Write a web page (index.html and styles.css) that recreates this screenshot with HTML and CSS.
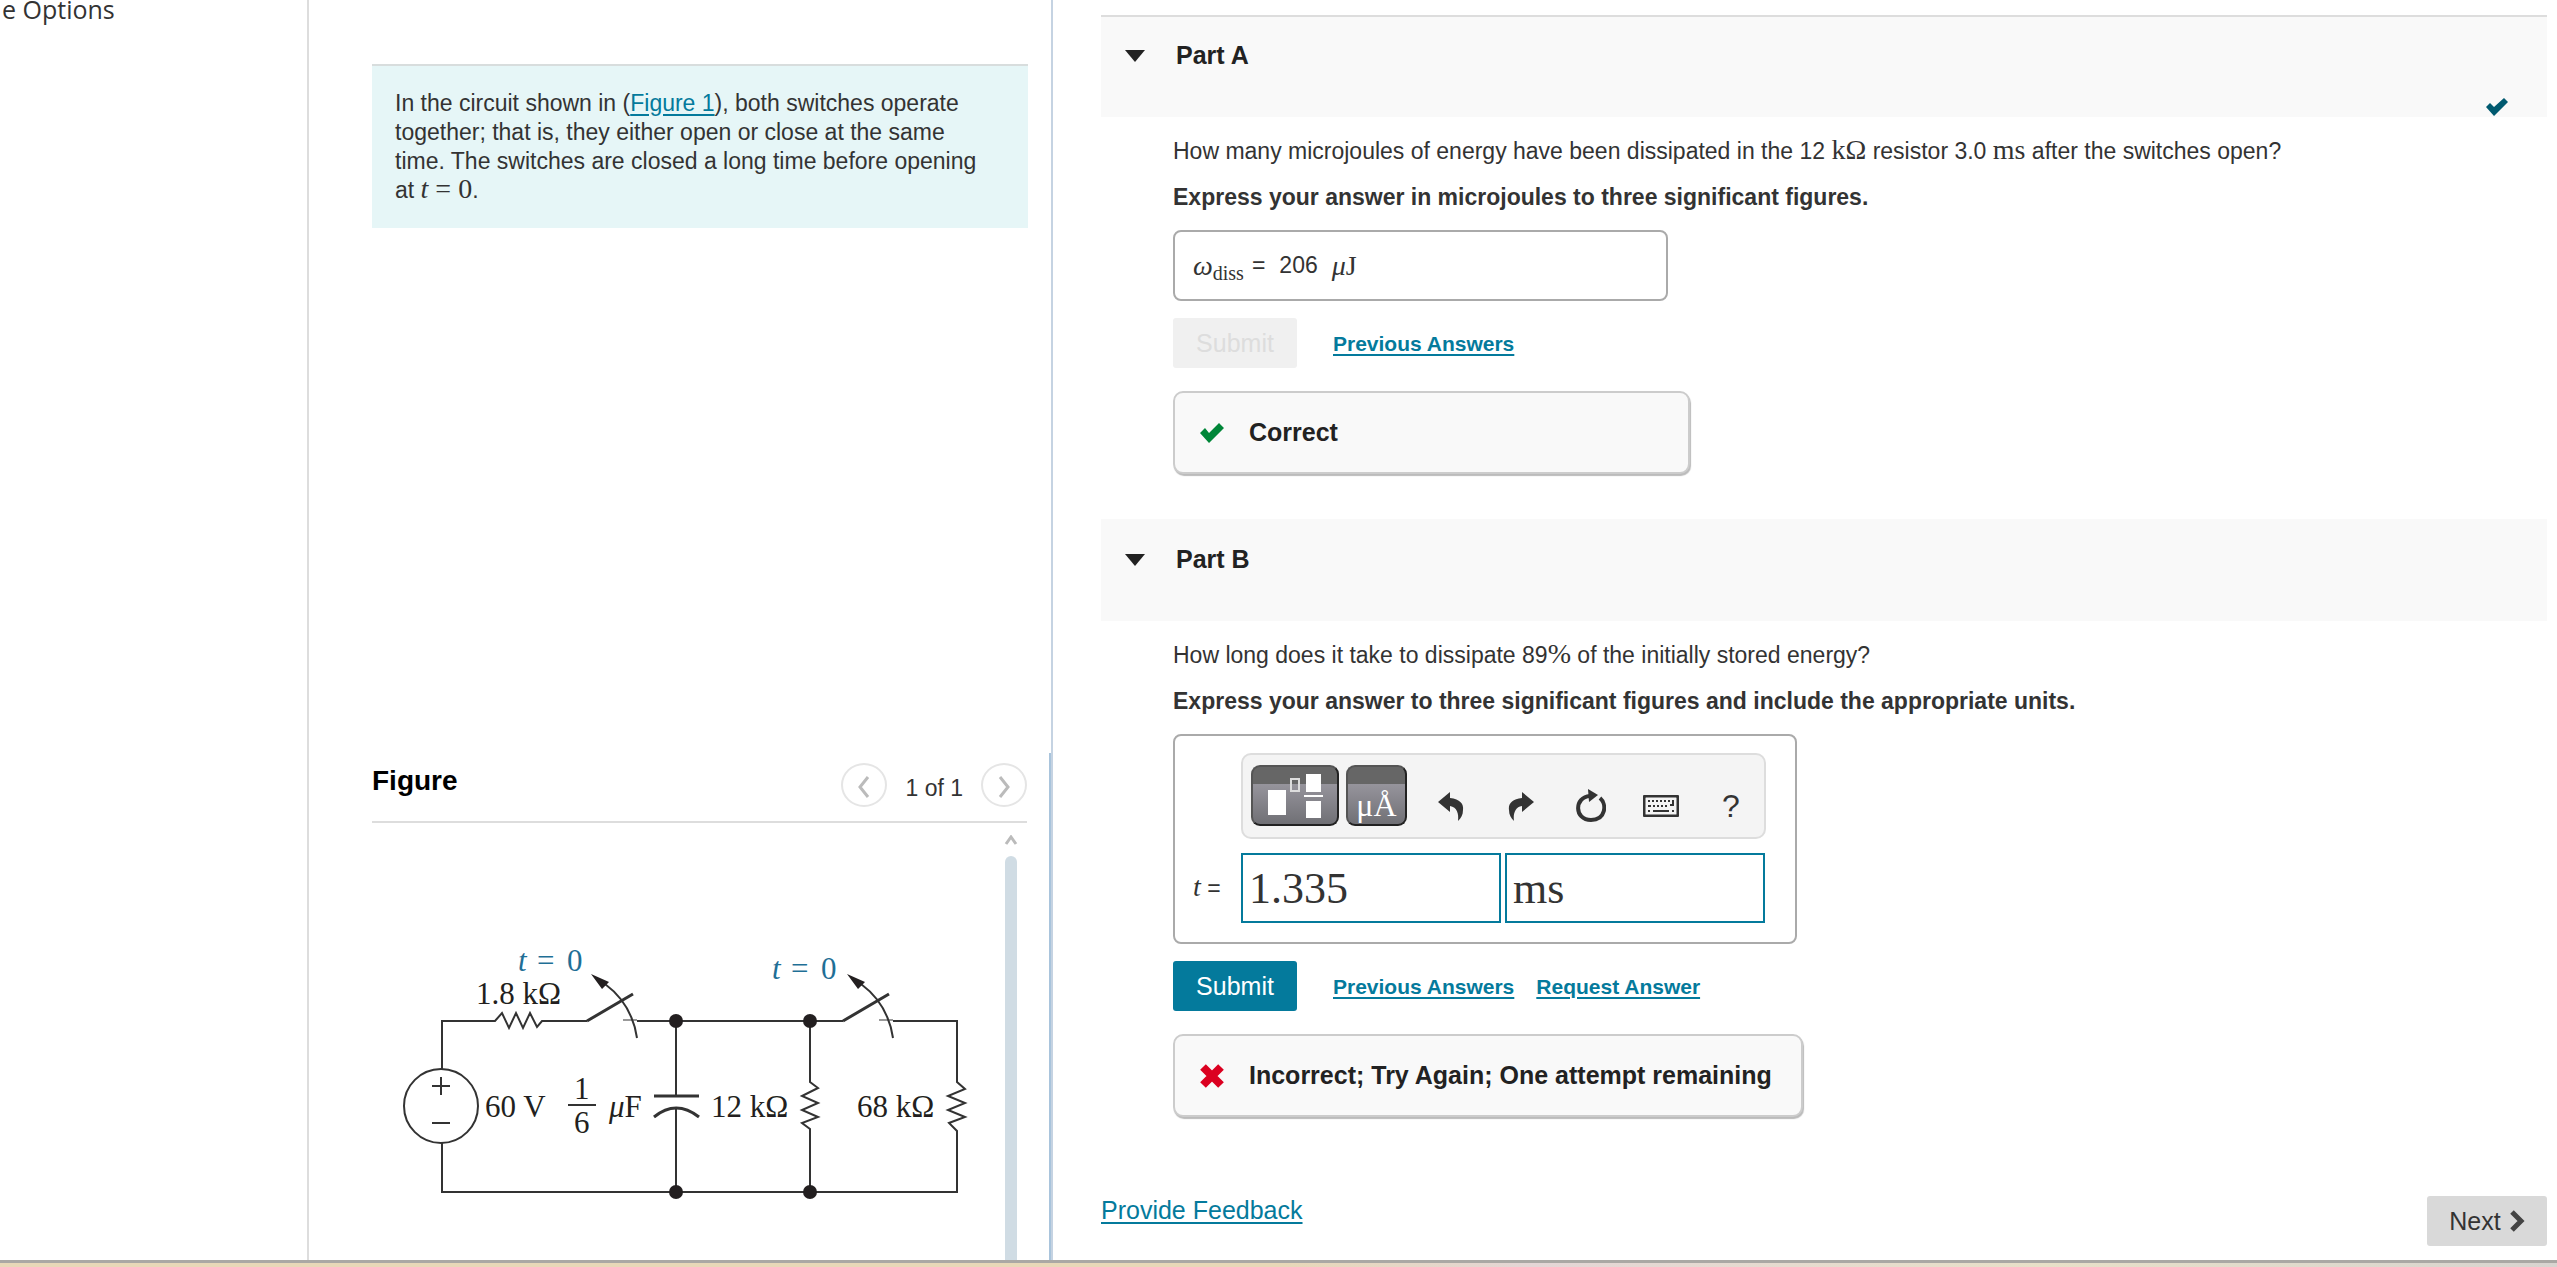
FILE: index.html
```html
<!DOCTYPE html>
<html lang="en">
<head>
    <meta charset="UTF-8">
    <meta name="viewport" content="width=device-width, initial-scale=1.0">
    <title>Circuit Problem</title>
    <link rel="stylesheet" href="styles.css">
</head>
<body>
    <div class="page">
        <nav class="sidebar">
            <span class="sidebar-title">e Options</span>
        </nav>

        <section class="problem">
            <div class="intro">
                In the circuit shown in (<a href="#figure">Figure 1</a>), both switches operate together; that is, they either open or close at the same time. The switches are closed a long time before opening at <span class="math"><i>t</i> = 0</span>.
            </div>

            <div class="figure" id="figure">
                <div class="figure-header">
                    <h2>Figure</h2>
                    <div class="pager">
                        <button type="button" class="round" aria-label="Previous figure">
                            <svg width="14" height="22" viewBox="0 0 14 22"><path d="M11 1 3 11l8 10"/></svg>
                        </button>
                        <span>1 of 1</span>
                        <button type="button" class="round" aria-label="Next figure">
                            <svg width="14" height="22" viewBox="0 0 14 22"><path d="M3 1l8 10-8 10"/></svg>
                        </button>
                    </div>
                </div>
                <div class="figure-body">
                    <svg class="circuit" width="610" height="290" viewBox="0 0 610 290">
                        <!-- wires -->
                        <g class="wire">
                            <path d="M70 139V91H123L130 83 137 98 144 83 151 98 158 83 165 97 170 91H215"/>
                            <path d="M265 91H471M521 91H585V152L593 159 576 166 593 173 576 180 593 187 577 193 585 201V262H70V212"/>
                            <path d="M304 91V166M304 178V262"/>
                            <path d="M438 91V152L446 158 430 166 446 173 430 180 446 187 430 193 438 199V262"/>
                            <circle cx="69" cy="176" r="37"/>
                            <path d="M60 156H78M69 147V165M60 193H78M196 175H224"/>
                        </g>
                        <g class="plate">
                            <path d="M282 166H327M282 187Q304 169 327 187"/>
                            <path d="M215 91 261 64M471 91 517 64"/>
                        </g>
                        <!-- switch arrows -->
                        <path class="stub" d="M251 90H265M507 90H521"/>
                        <path class="arc" d="M233 54Q260 74 265 108M489 54Q516 74 521 108"/>
                        <path class="dot" d="M219 44 237 52 230 59ZM475 44 493 52 486 59Z"/>
                        <g class="dot">
                            <circle cx="304" cy="91" r="7"/>
                            <circle cx="438" cy="91" r="7"/>
                            <circle cx="304" cy="262" r="7"/>
                            <circle cx="438" cy="262" r="7"/>
                        </g>
                        <g class="time">
                            <text x="146" y="41" font-style="italic">t</text>
                            <text x="165" y="41">=</text>
                            <text x="195" y="41">0</text>
                            <text x="400" y="49" font-style="italic">t</text>
                            <text x="419" y="49">=</text>
                            <text x="449" y="49">0</text>
                        </g>
                        <g class="label">
                            <text x="104" y="74">1.8 kΩ</text>
                            <text x="113" y="187">60 V</text>
                            <text x="202" y="169">1</text>
                            <text x="202" y="203">6</text>
                            <text x="237" y="187"><tspan font-style="italic">μ</tspan>F</text>
                            <text x="339" y="187">12 kΩ</text>
                            <text x="485" y="187">68 kΩ</text>
                        </g>
                    </svg>
                    <div class="scrollbar">
                        <svg width="14" height="10" viewBox="0 0 14 10"><path d="M2 9l5-7 5 7"/></svg>
                        <div class="thumb"></div>
                    </div>
                </div>
            </div>
        </section>

        <main class="parts">
            <section class="part part-a">
                <header class="part-header">
                    <svg class="caret" width="20" height="12" viewBox="0 0 20 12"><path d="M0 0H20L10 12Z"/></svg>
                    <h2>Part A</h2>
                    <svg class="done" width="24" height="19" viewBox="0 0 24 19"><path d="M1 9 5 5 9 9 19 0 23 4 9 18Z"/></svg>
                </header>
                <div class="part-body">
                    <p>How many microjoules of energy have been dissipated in the 12 <span class="math">kΩ</span> resistor 3.0 <span class="math">ms</span> after the switches open?</p>
                    <p class="instruction">Express your answer in microjoules to three significant figures.</p>
                    <div class="answer answer-static">
                        <span class="math"><i>ω</i><sub>diss</sub></span><span>=</span><span class="value">206</span><span class="math unit"><i>μ</i>J</span>
                    </div>
                    <div class="actions">
                        <button type="button" class="submit" disabled>Submit</button>
                        <a href="#">Previous Answers</a>
                    </div>
                    <div class="feedback">
                        <svg class="correct" width="26" height="22" viewBox="0 0 26 22"><path d="M1 11 6 6 10 11 20 1 25 6 10 21Z"/></svg>
                        <span>Correct</span>
                    </div>
                </div>
            </section>

            <section class="part">
                <header class="part-header">
                    <svg class="caret" width="20" height="12" viewBox="0 0 20 12"><path d="M0 0H20L10 12Z"/></svg>
                    <h2>Part B</h2>
                </header>
                <div class="part-body">
                    <p>How long does it take to dissipate 89<span class="math">%</span> of the initially stored energy?</p>
                    <p class="instruction">Express your answer to three significant figures and include the appropriate units.</p>
                    <form class="answer answer-entry">
                        <div class="toolbar">
                            <button type="button" class="tool templates" aria-label="Templates">
                                <svg width="56" height="46" viewBox="0 0 56 46">
                                    <path fill="#fff" d="M1 17H19V42H1ZM39 1H54V19H39ZM39 28H54V45H39ZM37 22H56V24H37Z"/>
                                    <path fill="none" stroke="#ddd" stroke-width="2" d="M24 6H32V18H24Z"/>
                                </svg>
                            </button>
                            <button type="button" class="tool units">μÅ</button>
                            <button type="button" class="icon" aria-label="Undo">
                                <svg width="26" height="30" viewBox="0 0 26 30"><path d="M0 11 12 1V7C22 8 26 13 25 19C25 24 23 27 20 30C21 23 19 16 12 15V21Z"/></svg>
                            </button>
                            <button type="button" class="icon" aria-label="Redo">
                                <svg width="26" height="30" viewBox="0 0 26 30"><path d="M26 11 14 1V7C4 8 0 13 1 19C1 24 3 27 6 30C5 23 7 16 14 15V21Z"/></svg>
                            </button>
                            <button type="button" class="icon" aria-label="Reset">
                                <svg width="30" height="34" viewBox="0 0 30 34"><path fill="none" stroke="#333" stroke-width="4" d="M14 7C-2 8-2 31 15 31C30 31 31 15 24 9"/><path d="M12 0 22 6 13 13Z"/></svg>
                            </button>
                            <button type="button" class="icon" aria-label="Keyboard">
                                <svg width="36" height="22" viewBox="0 0 36 22"><rect x="1" y="1" width="34" height="20" rx="2" fill="none" stroke="#333" stroke-width="3"/><path d="M5 5h2v2H5zM9 5h2v2H9zM13 5h2v2h-2zM17 5h2v2h-2zM21 5h2v2h-2zM25 5h2v2h-2zM29 5h2v6h-4V9h2zM5 10h3v2H5zM10 10h2v2h-2zM14 10h2v2h-2zM18 10h2v2h-2zM22 10h2v2h-2zM5 15h2v2H5zM10 15h16v2H10zM29 15h2v2h-2z"/></svg>
                            </button>
                            <button type="button" class="icon help">?</button>
                        </div>
                        <div class="fields">
                            <label for="value"><i class="math">t</i> =</label>
                            <input type="text" id="value" value="1.335">
                            <input type="text" id="unit" value="ms" aria-label="Units">
                        </div>
                    </form>
                    <div class="actions">
                        <button type="button" class="submit">Submit</button>
                        <a href="#">Previous Answers</a>
                        <a href="#">Request Answer</a>
                    </div>
                    <div class="feedback">
                        <svg class="incorrect" width="26" height="26" viewBox="0 0 26 26"><path d="M4 4 22 22M22 4 4 22"/></svg>
                        <span>Incorrect; Try Again; One attempt remaining</span>
                    </div>
                </div>
            </section>

            <div class="bottom">
                <a href="#">Provide Feedback</a>
                <button type="button" class="next">Next
                    <svg width="16" height="24" viewBox="0 0 16 24"><path d="M3 3l9 9-9 9"/></svg>
                </button>
            </div>
        </main>
    </div>
    <div class="taskbar"></div>
</body>
</html>
```
FILE: styles.css
```css
* {
    box-sizing: border-box;
}
body {
    margin: 0;
    height: 100vh;
    display: flex;
    flex-direction: column;
    overflow: hidden;
    background: #fff;
    color: #333;
    font-family: "Liberation Sans", Arial, sans-serif;
    font-size: 23px;
    line-height: 29px;
}
h2, p {
    margin: 0;
}
a {
    color: #047a9c;
    text-underline-offset: 3px;
}
button {
    font-family: inherit;
    font-size: 25px;
    padding: 0;
}
.math {
    font-family: "Liberation Serif", "Times New Roman", serif;
    font-size: 28px;
    line-height: 20px;
}
.page {
    flex: 1;
    min-height: 0;
    display: flex;
}
.sidebar {
    flex: 0 0 309px;
    border-right: 2px solid #ddd;
}
.sidebar-title {
    display: block;
    padding-left: 2px;
    font-family: "Open Sans", sans-serif;
    font-size: 25px;
    line-height: 18px;
}

/* problem column */
.problem {
    flex: 0 0 744px;
    display: flex;
    flex-direction: column;
    justify-content: space-between;
    padding-top: 64px;
    border-right: 2px solid #c5d3e2;
}
.intro {
    margin: 0 23px 0 63px;
    padding: 23px 36px 23px 23px;
    background: #e6f6f7;
    border-top: 2px solid #d8dddd;
}
.figure {
    flex: 0 0 507px;
    display: flex;
    flex-direction: column;
    padding: 0 22px 0 63px;
    border-right: 2px solid #a9c4dc;
}
.figure-header {
    display: flex;
    justify-content: space-between;
    height: 70px;
    padding-top: 10px;
    border-bottom: 2px solid #ddd;
}
.figure-header h2 {
    padding-top: 3px;
    font-size: 28px;
    color: #000;
}
.pager {
    display: flex;
    gap: 18px;
}
.pager span {
    padding-top: 11px;
}
.round {
    width: 46px;
    height: 44px;
    border: 2px solid #e5e5e5;
    border-radius: 50%;
    background: #fff;
}
.round svg {
    vertical-align: middle;
}
.round path, .scrollbar path {
    fill: none;
    stroke: #bbb;
    stroke-width: 3;
}
.figure-body {
    flex: 1;
    display: flex;
    justify-content: space-between;
}
.circuit {
    margin-top: 107px;
    font-family: "Liberation Serif", "Times New Roman", serif;
    font-size: 31px;
}
.wire, .plate, .arc, .stub {
    fill: none;
    stroke: #333;
    stroke-width: 2;
}
.plate {
    stroke-width: 3;
}
.stub {
    stroke: #999;
}
.dot, .label {
    fill: #231f20;
}
.time {
    fill: #1f6f96;
}
.scrollbar {
    display: flex;
    flex-direction: column;
    align-items: center;
    width: 14px;
    margin-right: 9px;
    padding-top: 12px;
}
.thumb {
    flex: 1;
    width: 12px;
    margin-top: 11px;
    background: #d0dce4;
    border-radius: 6px 6px 0 0;
}

/* parts column */
.parts {
    flex: 1;
    padding: 15px 10px 0 48px;
}
.part {
    margin-bottom: 45px;
}
.part-header {
    display: flex;
    align-items: flex-start;
    height: 102px;
    padding: 26px 38px 0 24px;
    background: #f9f9f9;
}
.part-a .part-header {
    border-top: 2px solid #ddd;
    padding-top: 24px;
}
.part-header h2 {
    flex: 1;
    margin-left: 31px;
    font-size: 25px;
    color: #222;
}
.caret {
    margin-top: 9px;
    fill: #222;
}
.done {
    align-self: flex-end;
    fill: #005a70;
}
.part-body {
    padding: 20px 0 0 72px;
}
.part-body p {
    margin-bottom: 17px;
}
.part-body .instruction {
    margin-bottom: 18px;
    font-weight: bold;
}
.answer {
    border: 2px solid #aaa;
    border-radius: 8px;
}
.answer-static {
    display: flex;
    align-items: center;
    width: 495px;
    height: 71px;
    padding-left: 18px;
}
.answer-static sub {
    font-size: 20px;
    line-height: 0;
    vertical-align: -5px;
}
.answer-static span {
    margin-right: 8px;
}
.answer-static .value {
    margin: 0 14px 0 6px;
}
.actions {
    display: flex;
    align-items: center;
    gap: 22px;
    margin: 17px 0 23px;
}
.actions a {
    font-size: 21px;
    font-weight: bold;
}
.submit {
    width: 124px;
    height: 50px;
    margin-right: 14px;
    border: 0;
    border-radius: 3px;
    background: #047a9c;
    color: #fff;
}
.submit:disabled {
    background: #f0f0f0;
    color: #ddd;
}
.feedback {
    display: flex;
    align-items: center;
    gap: 24px;
    width: fit-content;
    min-width: 517px;
    height: 83px;
    padding: 0 29px 0 24px;
    border: 2px solid #ccc;
    border-radius: 10px;
    background: #f9f9f9;
    box-shadow: 1px 2px 1px #bbb;
    color: #222;
    font-size: 25px;
    font-weight: bold;
}
.correct {
    fill: #008638;
}
.incorrect {
    fill: none;
    stroke: #db0020;
    stroke-width: 8;
}
.answer-entry {
    width: 624px;
    height: 210px;
    padding: 17px 29px 0 18px;
}
.toolbar {
    display: flex;
    align-items: flex-start;
    height: 86px;
    margin-left: 48px;
    padding: 10px 0 0 8px;
    border: 2px solid #ddd;
    border-radius: 10px;
    background: #f4f4f4;
}
.tool {
    flex: none;
    height: 61px;
    margin-right: 7px;
    border: 2px solid #222;
    border-top-color: #555;
    border-left-color: #555;
    border-radius: 9px;
    background: linear-gradient(#666 30%, #96949c 30%, #707075);
    color: #fff;
}
.templates {
    width: 88px;
    padding-top: 6px;
}
.units {
    width: 61px;
    padding-top: 20px;
    font-family: "Liberation Serif", serif;
    font-size: 32px;
}
.icon {
    flex: none;
    display: flex;
    align-items: center;
    justify-content: center;
    width: 70px;
    height: 70px;
    padding-top: 12px;
    border: 0;
    background: none;
    fill: #333;
    color: #333;
}
.toolbar .units {
    margin-right: 9px;
}
.help {
    font-size: 32px;
}
.fields {
    display: flex;
    align-items: center;
    gap: 4px;
    margin-top: 14px;
}
.fields label {
    width: 44px;
}
.fields input {
    width: 260px;
    height: 70px;
    padding: 0 6px;
    border: 2px solid #047a9c;
    color: #333;
    font-family: "Liberation Serif", "Times New Roman", serif;
    font-size: 44px;
}
.bottom {
    display: flex;
    align-items: flex-start;
    justify-content: space-between;
    margin-top: 79px;
    font-size: 25px;
}
.next {
    display: flex;
    align-items: center;
    justify-content: center;
    gap: 8px;
    width: 120px;
    height: 50px;
    border: 0;
    border-radius: 3px;
    background: #d9d9d9;
    color: #333;
}
.next path {
    fill: none;
    stroke: #444;
    stroke-width: 5;
}
.taskbar {
    flex: 0 0 7px;
    border-top: 3px solid #aaa8a4;
    background: linear-gradient(90deg, #e8d8b8, #e8d8b8 50%, #e4d6d6 60%, #e8e0c8 80%, #d8d4d0);
}
```
